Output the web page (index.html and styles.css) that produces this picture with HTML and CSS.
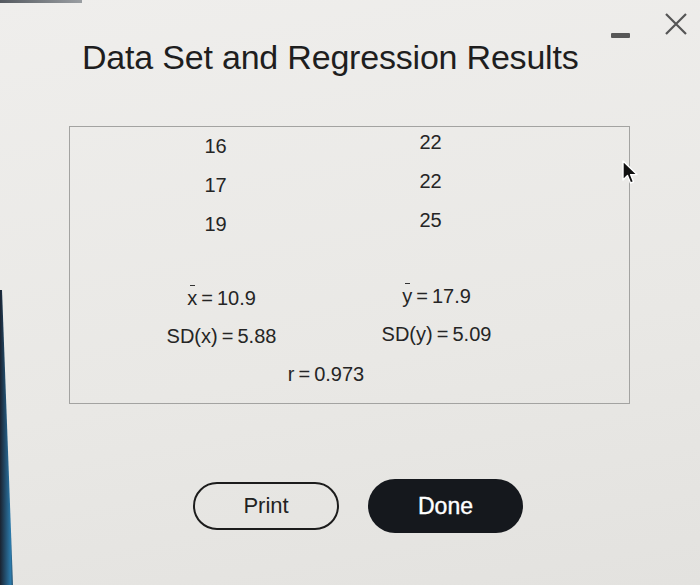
FILE: index.html
```html
<!DOCTYPE html>
<html lang="en">
<head>
    <meta charset="UTF-8">
    <meta name="viewport" content="width=device-width, initial-scale=1.0">
    <title>Data Set and Regression Results</title>
    <link rel="stylesheet" href="styles.css">
</head>
<body>
    <div class="header">
        <h1 class="title">Data Set and Regression Results</h1>
        <div class="controls">
            <span class="minimize"></span>
            <svg class="close" width="24" height="24" viewBox="0 0 24 24">
                <path d="M2 2 L22 22 M22 2 L2 22" stroke="#555" stroke-width="2.2" fill="none"/>
            </svg>
        </div>
    </div>

    <div class="results">
        <div class="data">
            <div>16</div><div class="right">22</div>
            <div>17</div><div class="right">22</div>
            <div>19</div><div class="right">25</div>
        </div>
        <div class="stats">
            <div><span class="bar">x</span> = 10.9</div>
            <div class="right"><span class="bar">y</span> = 17.9</div>
            <div>SD(x) = 5.88</div>
            <div class="right">SD(y) = 5.09</div>
            <div class="corr">r = 0.973</div>
        </div>
        <svg class="cursor" width="18" height="26" viewBox="0 0 18 26">
            <path d="M2 1 L2 20 L6.5 15.5 L9.5 23 L12.5 21.8 L9.6 14.6 L16 14.6 Z" fill="#111" stroke="#fff" stroke-width="1.4" stroke-linejoin="round"/>
        </svg>
    </div>

    <div class="buttons">
        <button class="btn print">Print</button>
        <button class="btn done">Done</button>
    </div>
</body>
</html>
```

FILE: styles.css
```css
body {
    margin: 0;
    width: 700px;
    height: 585px;
    overflow: hidden;
    font-family: "Liberation Sans", Arial, sans-serif;
    color: #222;
    background: linear-gradient(170deg, #efeeec 0%, #e9e8e5 60%, #e3e2df 100%);
    position: relative;
}

/* monitor bezel bits at the photo edges */
body::before {
    content: "";
    position: absolute;
    left: 0;
    top: 0;
    width: 15px;
    height: 585px;
    background: linear-gradient(to right, #1a2230, #2b78a8 70%, #2a3a48);
    clip-path: polygon(0 290px, 2px 290px, 13px 585px, 0 585px);
}

body::after {
    content: "";
    position: absolute;
    left: 0;
    top: 0;
    width: 82px;
    height: 3px;
    background: linear-gradient(to right, #555a60, #9a9ea2);
}

.header {
    display: flex;
    justify-content: space-between;
    align-items: flex-start;
    padding: 12px 12px 0 82px;
}

.title {
    margin: 25px 0 0 0;
    font-size: 34px;
    font-weight: normal;
    line-height: 40px;
    letter-spacing: -0.2px;
    color: #1e1e1e;
}

.controls {
    display: flex;
    align-items: flex-start;
    gap: 34px;
}

.minimize {
    display: block;
    width: 19px;
    height: 5px;
    margin-top: 21px;
    background: #575757;
    border-radius: 1px;
}

.results {
    position: relative;
    margin: 49px 0 0 69px;
    width: 559px;
    height: 276px;
    border: 1px solid #a3a3a1;
    font-size: 20px;
    color: #252525;
}

.data {
    display: grid;
    grid-template-columns: 215px 215px;
    padding-left: 38px;
    line-height: 39px;
    text-align: center;
}

.data .right {
    position: relative;
    top: -4px;
}

.stats {
    display: grid;
    grid-template-columns: 215px 215px;
    padding-left: 44px;
    margin-top: 35px;
    line-height: 38px;
    text-align: center;
    word-spacing: -1.5px;
}

.stats .right {
    position: relative;
    top: -2px;
}

.bar {
    position: relative;
}

.bar::before {
    content: "";
    position: absolute;
    left: 3px;
    top: -2px;
    width: 5px;
    height: 1px;
    background: #333;
}

.corr {
    grid-column: 1 / 3;
    padding-right: 6px;
}

.cursor {
    position: absolute;
    left: 551px;
    top: 33px;
}

.buttons {
    display: flex;
    align-items: center;
    gap: 29px;
    padding-left: 193px;
    margin-top: 75px;
}

.btn {
    font-family: "Liberation Sans", Arial, sans-serif;
    border-radius: 30px;
    cursor: pointer;
}

.print {
    width: 146px;
    height: 48px;
    border: 2px solid #1c1c1c;
    background: transparent;
    color: #222;
    font-size: 22px;
}

.done {
    width: 155px;
    height: 54px;
    border: none;
    background: #15181d;
    color: #fff;
    font-size: 23px;
    -webkit-text-stroke: 0.4px #fff;
}
```
